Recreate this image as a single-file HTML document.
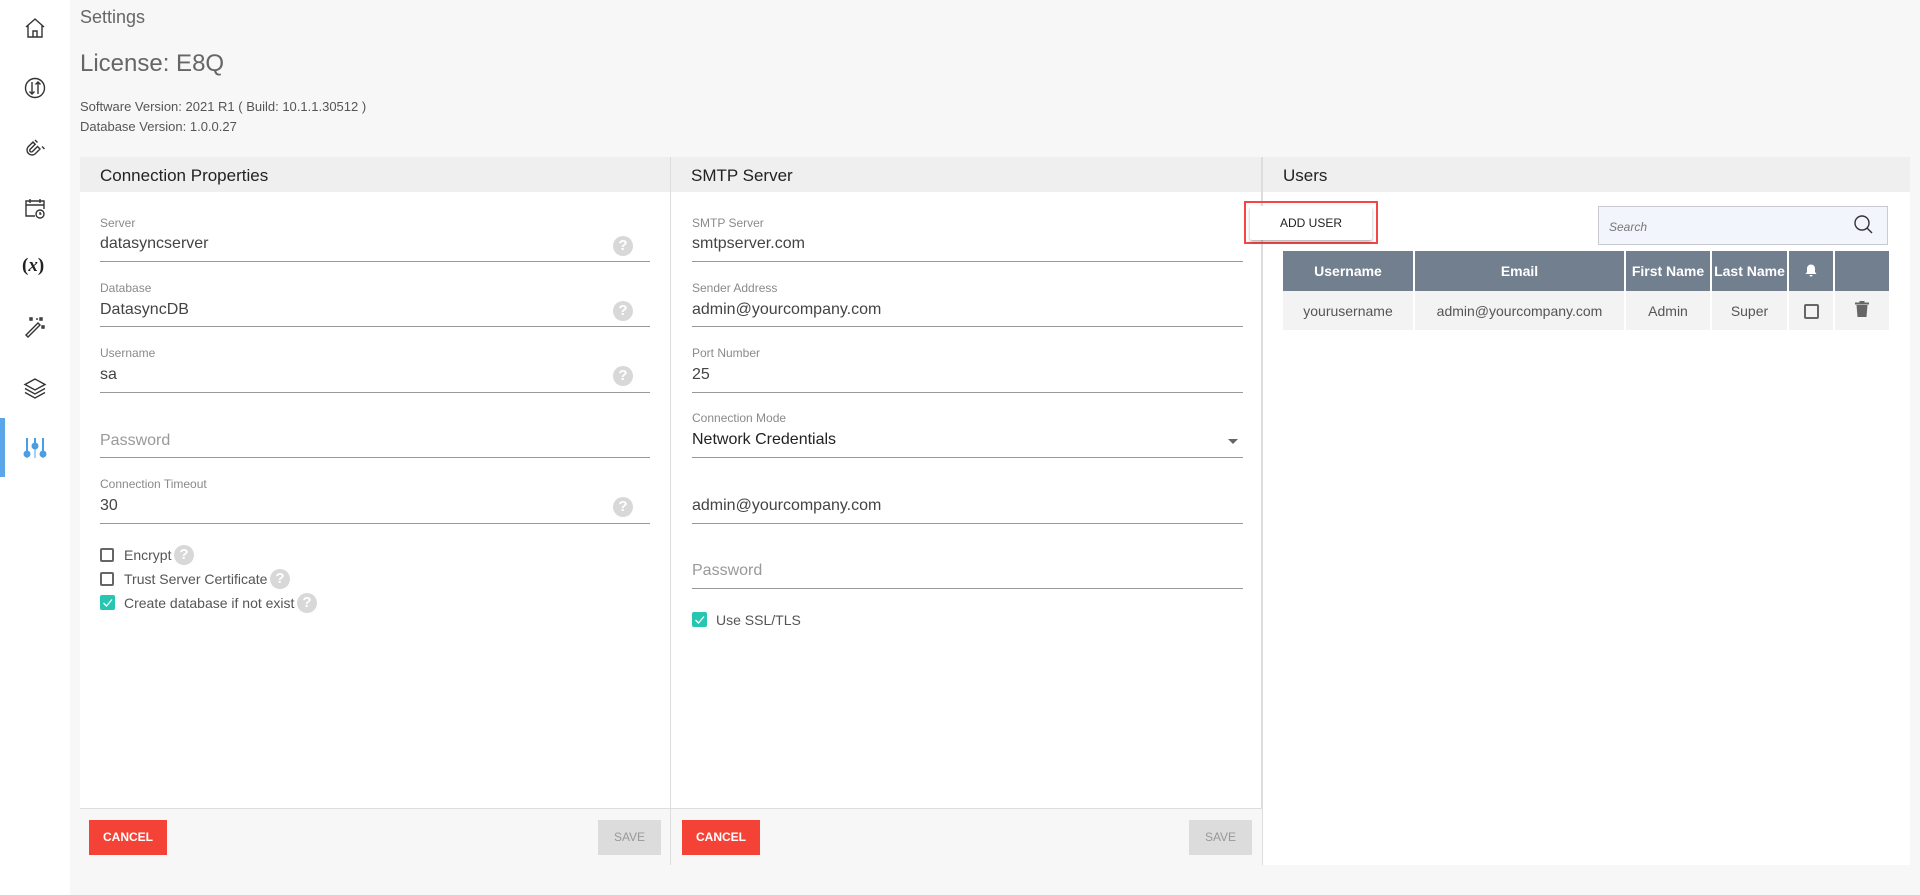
<!DOCTYPE html>
<html><head><meta charset="utf-8"><style>
*{box-sizing:border-box;margin:0;padding:0}
body{width:1920px;height:895px;background:#f7f7f7;font-family:"Liberation Sans",Arial,sans-serif;position:relative;overflow:hidden;color:#555}
.a{position:absolute}
#side{left:0;top:0;width:70px;height:895px;background:#fff}
.ic{position:absolute;left:23px;width:24px;height:24px}
.panel{position:absolute;top:157px;height:708px;background:#fff}
.ph{position:absolute;left:0;top:0;right:0;height:35px;background:#efefef;font-size:17px;color:#222;padding:9px 0 0 20px}
.lbl{position:absolute;font-size:12px;color:#8a8a8a}
.val{position:absolute;font-size:16px;color:#444}
.ph2{position:absolute;font-size:16px;color:#999}
.ln{position:absolute;height:1px;background:#999}
.help{position:absolute;width:20px;height:20px;border-radius:50%;background:#d8d8d8;color:#fff;font-size:15px;font-weight:bold;text-align:center;line-height:20px}
.cb{position:absolute;width:14px;height:14px;border:2px solid #666;border-radius:2px}
.cbc{position:absolute;width:15px;height:15px;background:#26c6b0;border-radius:2px}
.ct{position:absolute;font-size:14px;color:#555}
.foot{position:absolute;left:0;right:0;top:651px;height:57px;background:#f7f7f7;border-top:1px solid #ddd}
.cancel{position:absolute;top:11px;width:78px;height:35px;background:#f44336;color:#fff;font-size:12px;font-weight:bold;text-align:center;line-height:35px}
.save{position:absolute;top:11px;width:63px;height:35px;background:#dcdcdc;color:#999;font-size:12px;text-align:center;line-height:35px}
table{position:absolute;left:1283px;top:251px;width:606px;border-collapse:collapse;font-size:14px}
th{background:#717f8f;color:#fff;font-weight:bold;height:40px;border-right:2px solid #fff;font-size:14px}
td{background:#f3f3f3;height:39px;text-align:center;color:#555;border-right:2px solid #fff}
th:last-child,td:last-child{border-right:none}
</style></head><body>
<div id="side" class="a">
<svg class="ic" style="top:16px" viewBox="0 0 24 24" fill="none" stroke="#333" stroke-width="1.4"><path d="M3 11 12 3l9 8M5 9.5V21h14V9.5M10 21v-6h4v6"/></svg>
<svg class="ic" style="top:76px" viewBox="0 0 24 24" fill="none" stroke="#333" stroke-width="1.4"><circle cx="12" cy="12" r="9.5"/><path d="M9 6v12M6.5 15.5 9 18l2.5-2.5M15 18V6M12.5 8.5 15 6l2.5 2.5"/></svg>
<svg class="ic" style="top:137px" viewBox="0 0 24 24" fill="none" stroke="#333" stroke-width="1.4"><path d="M10 5 5 10a5 5 0 0 0 7 7l5-5-2.5-2.5-5 5a1.6 1.6 0 0 1-2.3-2.3l5-5zM12 3l2.5 2.5M19 9.5l2.5 2.5"/></svg>
<svg class="ic" style="top:196px" viewBox="0 0 24 24" fill="none" stroke="#333" stroke-width="1.4"><path d="M12 20H3V5h18v8M3 9h18M7 3v4M17 3v4"/><circle cx="17" cy="18" r="4"/><path d="M17 16v2h1.5"/></svg>
<div class="a" style="left:22px;top:255px;font-family:'Liberation Serif',serif;font-size:19px;font-weight:bold;color:#222">(<i>x</i>)</div>
<svg class="ic" style="top:315px" viewBox="0 0 24 24" fill="none" stroke="#333" stroke-width="1.4"><path d="M3 20 15 8l2 2L5 22zM7 3h2v2H7zM17 3h2v2h-2zM19 11h2v2h-2zM12 6h0M14 3v2"/></svg>
<svg class="ic" style="top:376px" viewBox="0 0 24 24" fill="none" stroke="#333" stroke-width="1.4"><path d="M12 3 2 8.5l10 5.5 10-5.5zM2 12.5 12 18l10-5.5M2 16.5 12 22l10-5.5"/></svg>
<div class="a" style="left:0;top:418px;width:5px;height:59px;background:#5aa6e8"></div>
<svg class="ic" style="top:436px" viewBox="0 0 24 24" fill="none" stroke="#4a9ee4" stroke-width="2"><path d="M4 2v20M12 2v20M20 2v20" stroke="#a9cff2"/><path d="M4 2v14M12 2v6M20 2v15"/><circle cx="4" cy="18" r="2.5" fill="#4a9ee4"/><circle cx="12" cy="10" r="2.5" fill="#4a9ee4"/><circle cx="20" cy="18" r="2.5" fill="#4a9ee4"/></svg>
</div>
<div class="a" style="left:80px;top:7px;font-size:18px;color:#666">Settings</div>
<div class="a" style="left:80px;top:50px;font-size:24px;color:#666">License: E8Q</div>
<div class="a" style="left:80px;top:97px;font-size:13px;color:#555;line-height:20px">Software Version: 2021 R1 ( Build: 10.1.1.30512 )<br>Database Version: 1.0.0.27</div>

<div class="panel" style="left:80px;width:591px;border-right:1px solid #ddd">
<div class="ph">Connection Properties</div>
</div>
<div class="panel" style="left:671px;width:591px;border-right:1px solid #ddd">
<div class="ph">SMTP Server</div>
</div>
<div class="panel" style="left:1262px;width:648px;border-left:1px solid #ddd">
<div class="ph">Users</div>
</div>

<!-- panel1 fields -->
<div class="lbl" style="left:100px;top:216px">Server</div><div class="val" style="left:100px;top:235px">datasyncserver</div><div class="ln" style="left:100px;top:261px;width:550px"></div><div class="help" style="left:613px;top:236px">?</div>
<div class="lbl" style="left:100px;top:281px">Database</div><div class="val" style="left:100px;top:301px">DatasyncDB</div><div class="ln" style="left:100px;top:326px;width:550px"></div><div class="help" style="left:613px;top:301px">?</div>
<div class="lbl" style="left:100px;top:346px">Username</div><div class="val" style="left:100px;top:366px">sa</div><div class="ln" style="left:100px;top:392px;width:550px"></div><div class="help" style="left:613px;top:366px">?</div>
<div class="ph2" style="left:100px;top:432px">Password</div><div class="ln" style="left:100px;top:457px;width:550px"></div>
<div class="lbl" style="left:100px;top:477px">Connection Timeout</div><div class="val" style="left:100px;top:497px">30</div><div class="ln" style="left:100px;top:523px;width:550px"></div><div class="help" style="left:613px;top:497px">?</div>
<div class="cb" style="left:100px;top:548px"></div><div class="ct" style="left:124px;top:547px">Encrypt</div><div class="help" style="left:174px;top:545px">?</div>
<div class="cb" style="left:100px;top:572px"></div><div class="ct" style="left:124px;top:571px">Trust Server Certificate</div><div class="help" style="left:270px;top:569px">?</div>
<div class="cbc" style="left:100px;top:595px"><svg width="15" height="15" viewBox="0 0 15 15"><path d="M3.5 8 6.5 11 12 4.5" fill="none" stroke="#fff" stroke-width="1.3"/></svg></div><div class="ct" style="left:124px;top:595px">Create database if not exist</div><div class="help" style="left:297px;top:593px">?</div>
<div class="a" style="left:80px;top:808px;width:590px;height:57px;background:#f7f7f7;border-top:1px solid #ddd"><div class="cancel" style="left:9px">CANCEL</div><div class="save" style="left:518px">SAVE</div></div>

<!-- panel2 -->
<div class="lbl" style="left:692px;top:216px">SMTP Server</div><div class="val" style="left:692px;top:235px">smtpserver.com</div><div class="ln" style="left:692px;top:261px;width:551px"></div>
<div class="lbl" style="left:692px;top:281px">Sender Address</div><div class="val" style="left:692px;top:301px">admin@yourcompany.com</div><div class="ln" style="left:692px;top:326px;width:551px"></div>
<div class="lbl" style="left:692px;top:346px">Port Number</div><div class="val" style="left:692px;top:366px">25</div><div class="ln" style="left:692px;top:392px;width:551px"></div>
<div class="lbl" style="left:692px;top:411px">Connection Mode</div><div class="val" style="left:692px;top:431px;color:#222">Network Credentials</div><div class="ln" style="left:692px;top:457px;width:551px"></div>
<div class="a" style="left:1228px;top:439px;width:0;height:0;border-left:5px solid transparent;border-right:5px solid transparent;border-top:5px solid #666"></div>
<div class="val" style="left:692px;top:497px">admin@yourcompany.com</div><div class="ln" style="left:692px;top:523px;width:551px"></div>
<div class="ph2" style="left:692px;top:562px">Password</div><div class="ln" style="left:692px;top:588px;width:551px"></div>
<div class="cbc" style="left:692px;top:612px"><svg width="15" height="15" viewBox="0 0 15 15"><path d="M3.5 8 6.5 11 12 4.5" fill="none" stroke="#fff" stroke-width="1.3"/></svg></div><div class="ct" style="left:716px;top:612px">Use SSL/TLS</div>
<div class="a" style="left:671px;top:808px;width:591px;height:57px;background:#f7f7f7;border-top:1px solid #ddd"><div class="cancel" style="left:11px">CANCEL</div><div class="save" style="left:518px">SAVE</div></div>

<!-- panel3 -->
<div class="a" style="left:1244px;top:201px;width:134px;height:43px;border:2px solid #f44646"></div>
<div class="a" style="left:1250px;top:206px;width:122px;height:34px;background:#fff;box-shadow:0 2px 3px rgba(0,0,0,.3);border-radius:2px;font-size:12px;color:#222;text-align:center;line-height:34px">ADD USER</div>
<div class="a" style="left:1598px;top:206px;width:290px;height:39px;background:#f2f6fc;border:1px solid #c8ccd2;font-size:12px;font-style:italic;color:#777;padding:13px 0 0 10px">Search</div>
<svg class="a" style="left:1853px;top:214px" width="22" height="22" viewBox="0 0 22 22" fill="none" stroke="#333" stroke-width="1.4"><circle cx="9" cy="9" r="7"/><path d="M14 14l5 5"/></svg>
<table><tr><th style="width:131px">Username</th><th style="width:211px">Email</th><th style="width:86px">First Name</th><th style="width:77px">Last Name</th><th style="width:46px"><svg width="14" height="14" viewBox="0 0 14 14"><path d="M7 1.5a4 4 0 0 0-4 4v3.5L1.5 11h11L11 9V5.5a4 4 0 0 0-4-4zM5.5 12a1.5 1.5 0 0 0 3 0z" fill="#fff"/></svg></th><th></th></tr>
<tr><td>yourusername</td><td>admin@yourcompany.com</td><td>Admin</td><td>Super</td><td><span style="display:inline-block;width:15px;height:15px;border:2px solid #666;border-radius:2px;vertical-align:middle"></span></td><td><svg width="16" height="18" viewBox="0 0 16 18"><path d="M1 2.5h14v2H1zM5.5 1h5v1.5h-5zM2.5 5h11l-1 12h-9z" fill="#666"/></svg></td></tr></table>
</body></html>
